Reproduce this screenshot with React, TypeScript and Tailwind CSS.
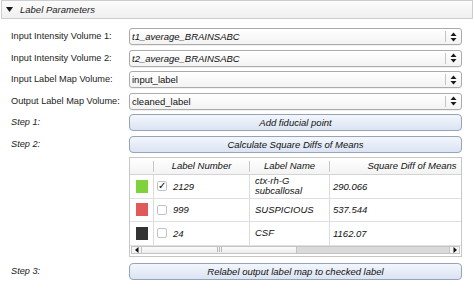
import React from "react";

function Spinner() {
  return (
    <svg width="7" height="10" viewBox="0 0 7 10" className="block">
      <path d="M3.5 0.5 L6.5 4 L0.5 4 Z" fill="#1a1a1a" />
      <path d="M0.5 6 L6.5 6 L3.5 9.5 Z" fill="#1a1a1a" />
    </svg>
  );
}

function Combo({ value, italic }: { value: string; italic?: boolean }) {
  return (
    <div className="flex-1 h-[17px] flex items-center rounded-[3px] border border-[#ababab] bg-gradient-to-b from-white to-[#f3f3f3] shadow-[0_1px_0_rgba(0,0,0,0.06)]">
      <span
        className={`flex-1 pl-[2px] text-[9.5px] leading-none text-[#111] ${
          italic ? "italic" : ""
        }`}
      >
        {value}
      </span>
      <div className="w-px h-[11px] bg-[#c4c4c4]" />
      <div className="w-[15px] flex items-center justify-center">
        <Spinner />
      </div>
    </div>
  );
}

function Button({ children }: { children: React.ReactNode }) {
  return (
    <div className="flex-1 h-[17px] flex items-center justify-center rounded-[4px] border border-[#97a3b8] bg-gradient-to-b from-[#f3f6fc] to-[#dbe4f3] text-[9.5px] italic leading-none text-[#111]">
      {children}
    </div>
  );
}

function Row({
  label,
  italic,
  children,
}: {
  label: string;
  italic?: boolean;
  children: React.ReactNode;
}) {
  return (
    <div className="flex items-center h-[17.5px]">
      <div
        className={`w-[118px] text-[9.2px] leading-none text-[#222] ${
          italic ? "italic" : ""
        }`}
      >
        {label}
      </div>
      {children}
    </div>
  );
}

const labels = [
  { color: "bg-[#7fd23a]", checked: true, num: "2129", name: ["ctx-rh-G", "subcallosal"], diff: "290.066" },
  { color: "bg-[#e05a5a]", checked: false, num: "999", name: ["SUSPICIOUS"], diff: "537.544" },
  { color: "bg-[#333333]", checked: false, num: "24", name: ["CSF"], diff: "1162.07" },
];

function LabelTable() {
  return (
    <div className="ml-[118px] h-[100px] flex flex-col border border-[#c6c6c6] bg-white overflow-hidden">
      {/* Header */}
      <div className="h-[17px] shrink-0 flex items-center border-b border-[#d4d4d4] bg-gradient-to-b from-white to-[#f3f3f3] text-[9.5px] italic leading-none text-[#111]">
        <div className="w-[23px] shrink-0" />
        <div className="w-px h-[11px] shrink-0 bg-[#c8c8c8]" />
        <div className="w-[95px] shrink-0 text-center">Label Number</div>
        <div className="w-px h-[11px] shrink-0 bg-[#c8c8c8]" />
        <div className="w-[79px] shrink-0 text-center">Label Name</div>
        <div className="w-px h-[11px] shrink-0 bg-[#c8c8c8]" />
        <div className="w-[164px] shrink-0 text-center whitespace-nowrap">Square Diff of Means</div>
      </div>
      {/* Rows */}
      {labels.map((l) => (
        <div
          key={l.num}
          className="h-[23.5px] shrink-0 flex border-b border-[#e0e0e0] text-[9.5px] italic leading-none text-[#111]"
        >
          <div className="w-[23px] shrink-0 flex items-center justify-center">
            <div className={`w-[12px] h-[13px] ${l.color}`} />
          </div>
          <div className="w-px shrink-0 bg-[#dcdcdc]" />
          <div className="w-[95px] shrink-0 flex items-center pl-[3px] gap-[6px]">
            <div className="w-[10px] h-[10px] rounded-[2px] border border-[#c2c2c2] bg-white flex items-center justify-center not-italic text-[10px] leading-none text-black">
              {l.checked ? "✓" : ""}
            </div>
            <span>{l.num}</span>
          </div>
          <div className="w-px shrink-0 bg-[#dcdcdc]" />
          <div className="w-[79px] shrink-0 flex flex-col justify-center pl-[5px] leading-[10px]">
            {l.name.map((n) => (
              <span key={n}>{n}</span>
            ))}
          </div>
          <div className="w-px shrink-0 bg-[#dcdcdc]" />
          <div className="flex-1 flex items-center pl-[3px]">{l.diff}</div>
        </div>
      ))}
      <div className="flex-1" />
      {/* Horizontal scrollbar */}
      <div className="h-[11px] mb-[2px] mx-px flex items-stretch border border-[#c4c4c4] bg-[#dadada]">
        <div className="w-[10px] flex items-center justify-center bg-[#f4f4f4] border-r border-[#c4c4c4]">
          <svg width="4" height="6" viewBox="0 0 4 6">
            <path d="M3.5 0 L0 3 L3.5 6 Z" fill="#111" />
          </svg>
        </div>
        <div className="w-[155px] flex items-center justify-center bg-gradient-to-b from-[#fbfbfb] to-[#ececec] border-r border-[#c4c4c4]">
          <div className="flex gap-[1px]">
            <div className="w-px h-[5px] bg-[#b8b8b8]" />
            <div className="w-px h-[5px] bg-[#b8b8b8]" />
            <div className="w-px h-[5px] bg-[#b8b8b8]" />
          </div>
        </div>
        <div className="flex-1" />
        <div className="w-[10px] flex items-center justify-center bg-[#f4f4f4] border-l border-[#c4c4c4]">
          <svg width="4" height="6" viewBox="0 0 4 6">
            <path d="M0.5 0 L4 3 L0.5 6 Z" fill="#111" />
          </svg>
        </div>
      </div>
    </div>
  );
}

export default function App() {
  return (
    <div className="w-[474px] h-[294px] bg-white overflow-hidden font-['Liberation_Sans',Arial,sans-serif]">
      {/* Collapsible header */}
      <div className="h-[19px] mx-[1px] flex items-center border-t border-b border-x border-[#cdcdcd] bg-gradient-to-b from-[#fcfcfc] to-[#efefef]">
        <svg width="7" height="5" viewBox="0 0 7 5" className="ml-[4px] mr-[7px]">
          <path d="M0 0 L7 0 L3.5 5 Z" fill="#1a1a1a" />
        </svg>
        <span className="text-[9.5px] italic leading-none text-[#1a1a1a]">Label Parameters</span>
      </div>

      <div className="pl-[11px] pr-[12px] pt-[9px] flex flex-col gap-[4px]">
        <Row label="Input Intensity Volume 1:">
          <Combo value="t1_average_BRAINSABC" italic />
        </Row>
        <Row label="Input Intensity Volume 2:">
          <Combo value="t2_average_BRAINSABC" italic />
        </Row>
        <Row label="Input Label Map Volume:">
          <Combo value="input_label" />
        </Row>
        <Row label="Output Label Map Volume:">
          <Combo value="cleaned_label" />
        </Row>
        <Row label="Step 1:" italic>
          <Button>Add fiducial point</Button>
        </Row>
        <Row label="Step 2:" italic>
          <Button>Calculate Square Diffs of Means</Button>
        </Row>
        <LabelTable />
        <div className="mt-[2px]">
          <Row label="Step 3:" italic>
            <Button>Relabel output label map to checked label</Button>
          </Row>
        </div>
      </div>
    </div>
  );
}
